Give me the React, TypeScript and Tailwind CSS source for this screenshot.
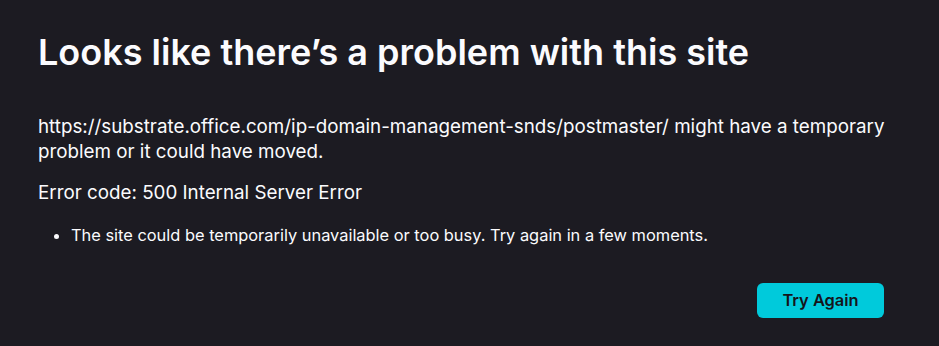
import React from 'react';

export default function App() {
  return (
    <div className="w-[939px] h-[346px] bg-[#1c1b22] text-[#fbfbfe] font-['Inter','Noto_Sans',sans-serif] overflow-hidden">
      <div className="ml-[38px] w-[852px] pt-[28px] flex flex-col">
        <h1 className="text-[36px] leading-[48px] font-semibold">
          Looks like there’s a problem with this site
        </h1>
        <p className="mt-[38px] text-[18.8px] leading-[25px]">
          https://substrate.office.com/ip-domain-management-snds/postmaster/ might have a temporary problem or it could have moved.
        </p>
        <p className="mt-[16px] text-[18.8px] leading-[25px]">Error code: 500 Internal Server Error</p>
        <ul className="mt-[18px] ml-[33px] list-disc text-[16.4px] leading-[24px]">
          <li>The site could be temporarily unavailable or too busy. Try again in a few moments.</li>
        </ul>
        <div className="mt-[36px] flex justify-end pr-[6px]">
          <button className="w-[127px] h-[35px] rounded-[6px] bg-[#00cadb] text-[#15141a] text-[16.4px] font-semibold">
            Try Again
          </button>
        </div>
      </div>
    </div>
  );
}
